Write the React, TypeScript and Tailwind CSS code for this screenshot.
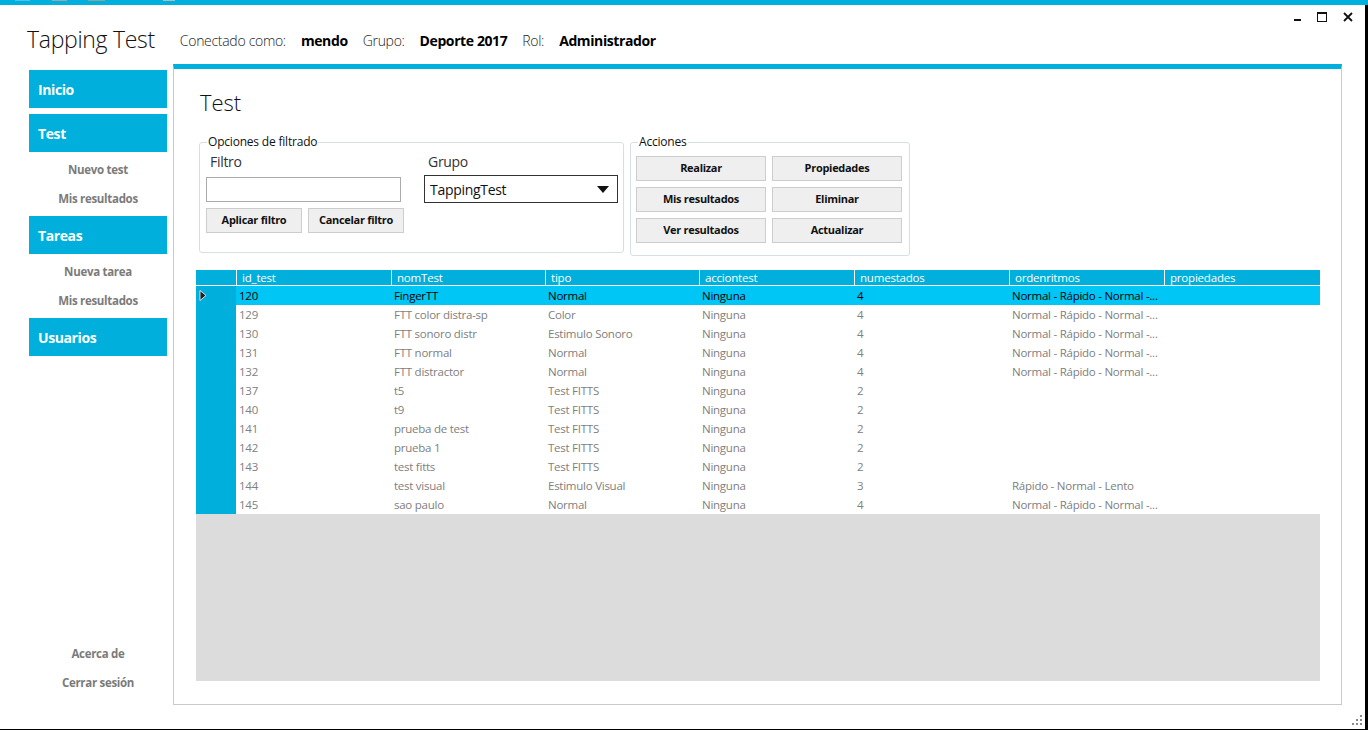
import React from "react";

const font = { fontFamily: '"Open Sans", "Noto Sans", sans-serif' };

const btnClass =
  "flex h-[25px] items-center justify-center border border-[#cdcdcd] bg-[#efefef] text-[11px] font-bold tracking-[-0.3px] text-[#111]";

const columns = ["id_test", "nomTest", "tipo", "acciontest", "numestados", "ordenritmos", "propiedades"];

const rows: string[][] = [
  ["120", "FingerTT", "Normal", "Ninguna", "4", "Normal - Rápido - Normal -...", ""],
  ["129", "FTT color distra-sp", "Color", "Ninguna", "4", "Normal - Rápido - Normal -...", ""],
  ["130", "FTT sonoro distr", "Estimulo Sonoro", "Ninguna", "4", "Normal - Rápido - Normal -...", ""],
  ["131", "FTT normal", "Normal", "Ninguna", "4", "Normal - Rápido - Normal -...", ""],
  ["132", "FTT distractor", "Normal", "Ninguna", "4", "Normal - Rápido - Normal -...", ""],
  ["137", "t5", "Test FITTS", "Ninguna", "2", "", ""],
  ["140", "t9", "Test FITTS", "Ninguna", "2", "", ""],
  ["141", "prueba de test", "Test FITTS", "Ninguna", "2", "", ""],
  ["142", "prueba 1", "Test FITTS", "Ninguna", "2", "", ""],
  ["143", "test fitts", "Test FITTS", "Ninguna", "2", "", ""],
  ["144", "test visual", "Estimulo Visual", "Ninguna", "3", "Rápido - Normal - Lento", ""],
  ["145", "sao paulo", "Normal", "Ninguna", "4", "Normal - Rápido - Normal -...", ""],
];

const gridCols = "grid grid-cols-[40px_155px_154px_154px_155px_155px_155px_156px]";

const subLinkClass =
  "flex h-[29px] items-center justify-center text-[11.5px] font-bold tracking-[-0.3px] text-[#7b7b7b]";

function NavButton({ label, first }: { label: string; first?: boolean }) {
  return (
    <div
      className={`flex h-[38px] items-center bg-[#00afdb] pl-[9px] text-[14px] font-bold tracking-[-0.4px] text-white ${first ? "" : "mt-[6px]"}`}
    >
      {label}
    </div>
  );
}

function SubLinks({ items }: { items: string[] }) {
  return (
    <div className="flex flex-col py-[3px]">
      {items.map((it) => (
        <div key={it} className={subLinkClass}>
          {it}
        </div>
      ))}
    </div>
  );
}

export default function App() {
  return (
    <div className="relative flex h-[730px] w-[1368px] flex-col overflow-hidden bg-white text-[#222]" style={font}>
      {/* top strip */}
      <div className="flex h-[5px] shrink-0 items-start bg-[#00afdb]">
        <span className="ml-[15px] h-[1px] w-[15px] bg-[#4fc4e8]" />
        <span className="ml-[22px] h-[1px] w-[15px] bg-[#9aa7ae]" />
        <span className="ml-[21px] h-[1px] w-[17px] bg-[#8aa894]" />
        <span className="ml-[58px] h-[1px] w-[12px] bg-[#b4bcbf]" />
      </div>

      <div className="flex min-h-0 flex-1 flex-col border-b border-r-[3px] border-black">
        {/* header */}
        <div className="flex h-[59px] shrink-0">
          <div className="flex items-center pl-[27px] pt-[10px]">
            <span className="text-[23px] font-light tracking-[-0.3px] text-[#111]">Tapping Test</span>
            <div className="ml-[25px] mt-[2px] flex items-center gap-[15px] text-[14px]">
              <span className="font-light tracking-[-0.3px] text-[#222]">Conectado como:</span>
              <span className="font-bold tracking-[-0.4px] text-black">mendo</span>
              <span className="font-light tracking-[-0.3px] text-[#222]">Grupo:</span>
              <span className="font-bold tracking-[-0.4px] text-black">Deporte 2017</span>
              <span className="font-light tracking-[-0.3px] text-[#222]">Rol:</span>
              <span className="font-bold tracking-[-0.4px] text-black">Administrador</span>
            </div>
          </div>
          <div className="ml-auto flex items-start gap-[16px] pr-[12px] pt-[7px]">
            <svg width="7" height="10" viewBox="0 0 7 10">
              <rect x="0" y="7" width="7" height="2" fill="#111" />
            </svg>
            <svg width="10" height="10" viewBox="0 0 10 10">
              <rect x="0.5" y="0.5" width="9" height="9" fill="none" stroke="#111" />
              <rect x="0" y="0" width="10" height="2" fill="#111" />
            </svg>
            <svg width="10" height="10" viewBox="0 0 10 10">
              <path d="M1 1 L9 9 M9 1 L1 9" stroke="#111" strokeWidth="1.8" />
            </svg>
          </div>
        </div>

        {/* body */}
        <div className="flex min-h-0 flex-1 pb-[24px] pr-[23px]">
          {/* sidebar */}
          <aside className="flex w-[173px] shrink-0 flex-col pl-[29px] pr-[6px] pt-[6px]">
            <NavButton label="Inicio" first />
            <NavButton label="Test" />
            <SubLinks items={["Nuevo test", "Mis resultados"]} />
            <NavButton label="Tareas" first />
            <SubLinks items={["Nueva tarea", "Mis resultados"]} />
            <NavButton label="Usuarios" first />
            <div className="mt-auto flex flex-col pb-[8px]">
              <div className={subLinkClass}>Acerca de</div>
              <div className={subLinkClass}>Cerrar sesión</div>
            </div>
          </aside>

          {/* main panel */}
          <main className="flex min-w-0 flex-1 flex-col border-x border-b border-t-[5px] border-x-[#cacaca] border-b-[#cacaca] border-t-[#00afdb]">
            <h1 className="ml-[26px] mt-[18px] text-[22px] font-light leading-[30px] text-[#111]">Test</h1>

            <div className="ml-[25px] mt-[17px] flex items-start gap-[6px]">
              <fieldset className="w-[425px] rounded-[3px] border border-[#d6dfe6] pb-[19px] pl-[6px]">
                <legend className="ml-[1px] px-[1px] text-[12px] leading-[16px] tracking-[-0.2px] text-[#111]">
                  Opciones de filtrado
                </legend>
                <div className="flex">
                  <div className="flex w-[218px] flex-col">
                    <div className="pl-[4px] pt-[2px] text-[14px] leading-[20px] tracking-[-0.3px] text-[#333]">Filtro</div>
                    <div className="mt-[5px] h-[25px] w-[195px] border border-[#ababab] bg-white" />
                    <div className="mt-[6px] flex gap-[6px]">
                      <div className={`${btnClass} w-[96px]`}>Aplicar filtro</div>
                      <div className={`${btnClass} w-[96px]`}>Cancelar filtro</div>
                    </div>
                  </div>
                  <div className="flex flex-col">
                    <div className="pl-[4px] pt-[2px] text-[14px] leading-[20px] tracking-[-0.3px] text-[#333]">Grupo</div>
                    <div className="mt-[3px] flex h-[28px] w-[194px] items-center justify-between border border-[#333] bg-white pl-[5px] pr-[8px]">
                      <span className="text-[14px] tracking-[-0.3px] text-[#111]">TappingTest</span>
                      <svg width="12" height="7" viewBox="0 0 12 7">
                        <polygon points="0,0 12,0 6,7" fill="#111" />
                      </svg>
                    </div>
                  </div>
                </div>
              </fieldset>

              <fieldset className="w-[280px] rounded-[3px] border border-[#d6dfe6] pb-[12px] pl-[5px] pt-[6px]">
                <legend className="ml-[2px] px-[1px] text-[12px] leading-[16px] tracking-[-0.2px] text-[#111]">Acciones</legend>
                <div className="grid w-[266px] grid-cols-2 gap-[6px]">
                  <div className={btnClass}>Realizar</div>
                  <div className={btnClass}>Propiedades</div>
                  <div className={btnClass}>Mis resultados</div>
                  <div className={btnClass}>Eliminar</div>
                  <div className={btnClass}>Ver resultados</div>
                  <div className={btnClass}>Actualizar</div>
                </div>
              </fieldset>
            </div>

            {/* data grid */}
            <div className="ml-[22px] mt-[14px] flex h-[411px] w-[1124px] flex-col bg-[#dcdcdc]">
              <div
                className={`${gridCols} h-[16px] border-b border-white bg-[#00afdb] text-[11.5px] leading-[15px] tracking-[-0.2px] text-white`}
              >
                <div />
                {columns.map((c) => (
                  <div key={c} className="border-l border-white pl-[5px]">
                    {c}
                  </div>
                ))}
              </div>
              {rows.map((r, i) => {
                const sel = i === 0;
                return (
                  <div
                    key={r[0]}
                    className={`${gridCols} h-[19px] text-[11.5px] leading-[19px] tracking-[-0.25px] ${sel ? "bg-[#00c6f6] text-black" : "bg-white text-[#808080]"}`}
                  >
                    <div className="flex items-center bg-[#00afdb] pl-[3px]">
                      {sel && (
                        <svg width="8" height="11" viewBox="0 0 8 11">
                          <polygon points="1,0.5 7,5.5 1,10.5" fill="#222" stroke="#fff" strokeWidth="0.8" />
                        </svg>
                      )}
                    </div>
                    {r.map((v, j) => (
                      <div key={j} className="overflow-hidden whitespace-nowrap pl-[3px]">
                        {v}
                      </div>
                    ))}
                  </div>
                );
              })}
            </div>
          </main>
        </div>
      </div>

      {/* resize grip */}
      <svg className="absolute bottom-[5px] right-[6px]" width="10" height="10" viewBox="0 0 10 10">
        <rect x="8" y="0" width="2" height="2" fill="#8a8a8a" />
        <rect x="4" y="4" width="2" height="2" fill="#8a8a8a" />
        <rect x="8" y="4" width="2" height="2" fill="#8a8a8a" />
        <rect x="0" y="8" width="2" height="2" fill="#8a8a8a" />
        <rect x="4" y="8" width="2" height="2" fill="#8a8a8a" />
        <rect x="8" y="8" width="2" height="2" fill="#8a8a8a" />
      </svg>
    </div>
  );
}
